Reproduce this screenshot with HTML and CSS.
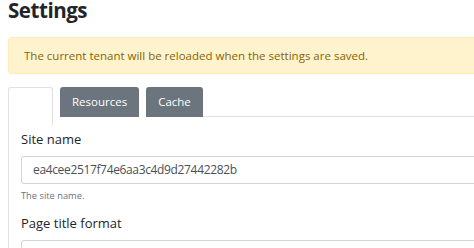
FILE: index.html
```html
<!DOCTYPE html>
<html>
<head>
<meta charset="utf-8">
<link rel="stylesheet" href="styles.css">
</head>
<body>
<h2 class="page-title">Settings</h2>
<div class="alert">The current tenant will be reloaded when the settings are saved.</div>
<div class="tabs">
  <div class="tab tab-active"></div>
  <div class="tab">Resources</div>
  <div class="tab">Cache</div>
  <div class="tab-rest"></div>
</div>
<div class="tab-content">
  <div class="field">
    <label class="label">Site name</label>
    <div class="input">ea4cee2517f74e6aa3c4d9d27442282b</div>
    <div class="hint">The site name.</div>
  </div>
  <div class="field">
    <label class="label">Page title format</label>
    <div class="input"></div>
  </div>
</div>
</body>
</html>
```

FILE: styles.css
```css
html, body {
  overflow: hidden;
}
body {
  margin: 0;
  padding: 0 0 0 8px;
  font-family: "Open Sans", "Noto Sans", sans-serif;
  font-size: 12px;
  line-height: 18px;
  color: #212529;
  background: #fff;
  width: 520px;
}
.page-title {
  margin: 0;
  padding-top: 1px;
  font-size: 20.5px;
  font-weight: 700;
  line-height: 19px;
  color: #212529;
  letter-spacing: -0.45px;
}
.alert {
  margin-top: 17px;
  padding: 9px 15px 8px 15px;
  background: #fff3cd;
  border: 1px solid #ffeeba;
  border-radius: 3px;
  color: #856404;
  font-size: 11.5px;
  height: 18px;
}
.tabs {
  display: flex;
  align-items: flex-end;
  margin-top: 13px;
}
.tab {
  height: 30px;
  padding: 0 12px;
  display: flex;
  align-items: center;
  background: #6c757d;
  color: #fff;
  font-size: 11.5px;
  border-radius: 3px 3px 0 0;
  margin-right: 7px;
  box-sizing: border-box;
}
.tab-active {
  width: 45px;
  background: #fff;
  border: 1px solid #dee2e6;
  border-bottom: none;
  height: 38px;
  margin-bottom: -8px;
  position: relative;
}
.tab-rest {
  flex: 1;
  border-bottom: 1px solid #dee2e6;
  align-self: flex-end;
  margin-left: -7px;
}
.tab-content {
  border-left: 1px solid #dee2e6;
  padding: 12px 0 0 12px;
}
.label {
  display: block;
  font-size: 13px;
  line-height: 20px;
  margin-bottom: 7px;
}
.input {
  height: 28px;
  box-sizing: border-box;
  border: 1px solid #ced4da;
  border-radius: 3px;
  padding: 0 11px;
  font-size: 12px;
  letter-spacing: -0.35px;
  line-height: 26px;
  color: #495057;
}
.hint {
  font-size: 9.3px;
  line-height: 15px;
  color: #6c757d;
  margin-top: 4px;
}
.field {
  margin-bottom: 10px;
}
```
